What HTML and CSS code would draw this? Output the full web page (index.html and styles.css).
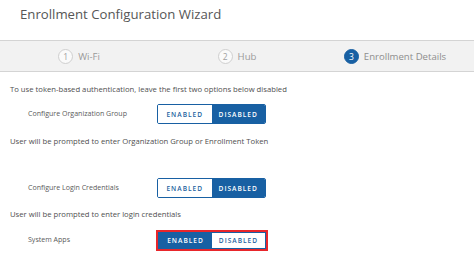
FILE: index.html
```html
<!DOCTYPE html>
<html>
<head>
<meta charset="utf-8">
<link rel="stylesheet" href="styles.css">
</head>
<body>
<div class="page">
  <h1 class="title">Enrollment Configuration Wizard</h1>
  <div class="steps">
    <div class="step"><span class="num">1</span><span class="step-label">Wi-Fi</span></div>
    <div class="step"><span class="num">2</span><span class="step-label">Hub</span></div>
    <div class="step active"><span class="num">3</span><span class="step-label">Enrollment Details</span></div>
  </div>
  <div class="content">
    <p class="intro">To use token-based authentication, leave the first two options below disabled</p>
    <div class="row row-1">
      <span class="label">Configure Organization Group</span>
      <div class="toggle"><span class="opt">ENABLED</span><span class="opt on">DISABLED</span></div>
    </div>
    <p class="note note-1">User will be prompted to enter Organization Group or Enrollment Token</p>
    <div class="row row-2">
      <span class="label">Configure Login Credentials</span>
      <div class="toggle"><span class="opt">ENABLED</span><span class="opt on">DISABLED</span></div>
    </div>
    <p class="note note-2">User will be prompted to enter login credentials</p>
    <div class="row row-3">
      <span class="label">System Apps</span>
      <div class="highlight">
        <div class="toggle small"><span class="opt on">ENABLED</span><span class="opt">DISABLED</span></div>
      </div>
    </div>
  </div>
</div>
</body>
</html>
```
FILE: styles.css
```css
* { box-sizing: border-box; }
html, body { margin: 0; padding: 0; background: #fff; }
body { font-family: "Open Sans", "Liberation Sans", sans-serif; color: #555; width: 474px; height: 261px; overflow: hidden; }

.title {
  margin: 0;
  height: 40px;
  padding: 3px 0 0 20px;
  font-size: 13.2px;
  font-weight: 400;
  line-height: 22px;
  color: #565656;
}

.steps {
  display: grid;
  grid-template-columns: repeat(3, 1fr);
  height: 32px;
  background: #f2f2f2;
  border-top: 1px solid #d4d4d4;
  border-bottom: 1px solid #d4d4d4;
}
.step {
  display: flex;
  align-items: center;
  justify-content: center;
  gap: 5px;
  color: #9a9a9a;
  font-size: 9.6px;
}
.num {
  width: 15px;
  height: 15px;
  border-radius: 50%;
  border: 1px solid #cfcfcf;
  background: #fafafa;
  display: flex;
  align-items: center;
  justify-content: center;
  font-size: 8.5px;
  color: #a0a0a0;
}
.step.active .num { background: #1860a3; border-color: #1860a3; color: #fff; }
.step.active .step-label { color: #8e8e8e; }

.content { padding-left: 10px; font-size: 7.7px; }
.intro, .note { margin: 0; line-height: 12px; color: #4f4f4f; }
.intro { margin-top: 11px; }

.row { display: flex; align-items: center; }
.label { width: 147px; padding-left: 18px; color: #5a5a5a; font-size: 7.05px; }
.row-1 { margin-top: 9px; }
.row-1 .label, .row-2 .label { margin-top: -2px; }
.note-1 { margin-top: 11px; }
.row-2 { margin-top: 31px; }
.note-2 { margin-top: 10px; }
.row-3 { margin-top: 10px; }
.row-3 .label { width: 146px; margin-top: -3px; }

.toggle {
  display: flex;
  width: 109px;
  height: 20px;
  border: 1px solid #1860a3;
  border-radius: 2px;
  overflow: hidden;
}
.opt {
  flex: 1;
  display: flex;
  align-items: center;
  justify-content: center;
  font-size: 6.6px;
  font-weight: 600;
  letter-spacing: 1px;
  color: #1d5f9e;
  background: #fff;
}
.opt.on { background: #1860a3; color: #fff; }

.highlight {
  border: 2px solid #e8262b;
  padding: 0;
}
.toggle.small { width: 108px; height: 17px; border-radius: 0; }
```
